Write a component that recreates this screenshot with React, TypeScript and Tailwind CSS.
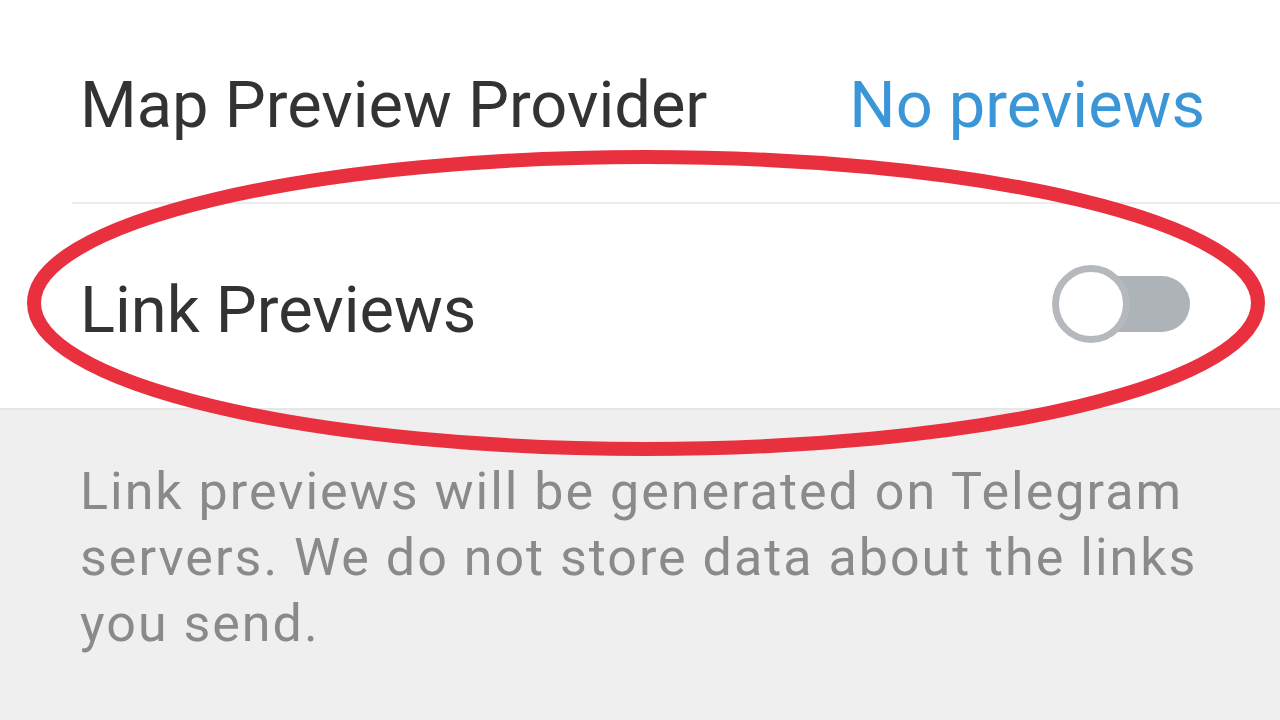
import React from "react";

// Telegram "Data and Storage" fragment, blown up, with a red circle drawn over it

function Toggle() {
  return (
    <div className="relative -mt-[12px] h-[78px] w-[138px]">
      <div className="absolute right-0 top-[11px] h-[56px] w-[110px] rounded-full bg-[#aeb3b8]" />
      <div className="absolute left-0 top-0 h-[78px] w-[78px] rounded-full border-[7px] border-[#b5b9bd] bg-white" />
    </div>
  );
}

export default function App() {
  return (
    <div className="relative h-[720px] w-[1280px] overflow-hidden bg-[#efefef] font-['Roboto',sans-serif]">
      <div className="bg-white">
        <div className="ml-[72px] flex h-[204px] items-start justify-between border-b-2 border-[#ececec] pr-[75px] pl-[8px] pt-[72px]">
          <span className="text-[65px] leading-[66px] text-[#333333]">Map Preview Provider</span>
          <span className="text-[65px] leading-[66px] text-[#3b96d8]">No previews</span>
        </div>
        <div className="flex h-[204px] items-start justify-between pr-[90px] pl-[80px] pt-[73px]">
          <span className="text-[65px] leading-[66px] text-[#333333]">Link Previews</span>
          <Toggle />
        </div>
      </div>
      <div className="h-[2px] bg-[#e6e6e6]" />
      <p className="pl-[80px] pr-[60px] pt-[49px] text-[52px] leading-[66px] tracking-[2px] text-[#8a8a8a]">
        Link previews will be generated on Telegram servers. We do not store data about the links you send.
      </p>

      <svg className="pointer-events-none absolute inset-0" width="1280" height="720" viewBox="0 0 1280 720">
        <ellipse cx="646" cy="303" rx="612" ry="146" fill="none" stroke="#e8303f" strokeWidth="14" />
      </svg>
    </div>
  );
}
